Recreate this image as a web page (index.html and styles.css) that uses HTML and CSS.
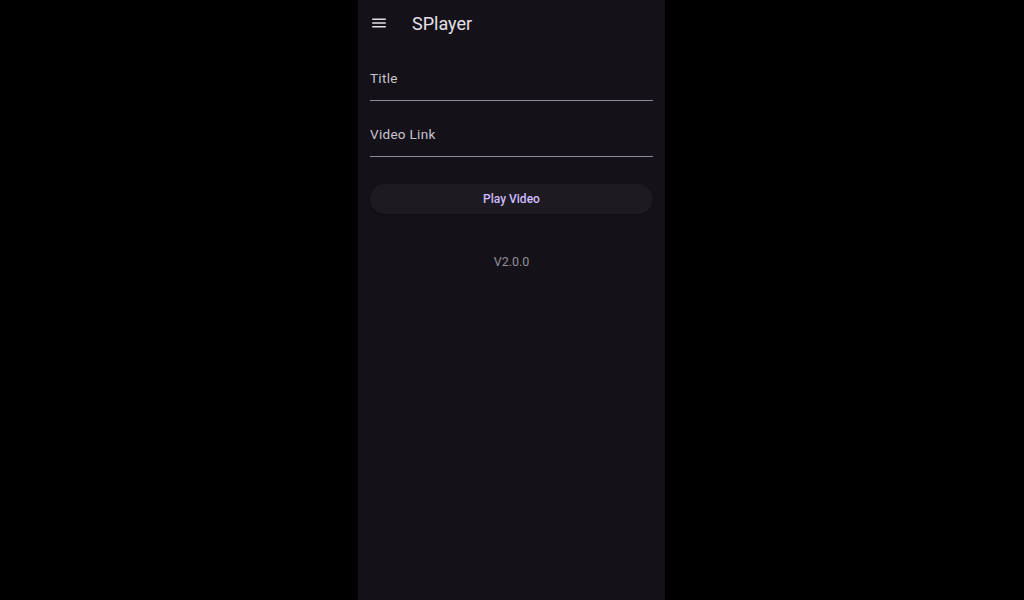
FILE: index.html
```html
<!DOCTYPE html>
<html lang="en">
<head>
    <meta charset="UTF-8">
    <title>SPlayer</title>
    <link rel="stylesheet" href="styles.css">
</head>
<body>
    <div class="phone">
        <div class="app-bar">
            <svg class="menu-icon" width="18" height="18" viewBox="0 0 24 24">
                <path d="M3 18h18v-2H3v2zm0-5h18v-2H3v2zm0-7v2h18V6H3z" fill="#e6e0e9"/>
            </svg>
            <div class="app-title">SPlayer</div>
        </div>
        <div class="content">
            <div class="field">
                <div class="label">Title</div>
            </div>
            <div class="field">
                <div class="label">Video Link</div>
            </div>
            <div class="play-btn">Play Video</div>
            <div class="version">V2.0.0</div>
        </div>
    </div>
</body>
</html>
```
FILE: styles.css
```css
html, body {
    margin: 0;
    height: 100%;
}

body {
    font-family: Roboto, "Noto Sans", sans-serif;
    background-color: #000;
    display: flex;
    justify-content: center;
}

.phone {
    width: 307px;
    margin-left: -1px;
    height: 100%;
    background-color: #141218;
    display: flex;
    flex-direction: column;
}

.app-bar {
    height: 46px;
    display: flex;
    align-items: center;
    padding-left: 12px;
}

    .app-bar .menu-icon {
        display: block;
        margin-bottom: 1px;
    }

    .app-bar .app-title {
        margin-left: 24px;
        color: #e6e0e9;
        font-size: 18px;
        margin-top: 1px;
    }

.content {
    padding: 0 12px;
    display: flex;
    flex-direction: column;
}

.field {
    height: 42px;
    border-bottom: 1px solid #8e8a94;
    display: flex;
    align-items: flex-end;
    margin-top: 12px;
}

    .field .label {
        color: #cac4d0;
        font-size: 13.5px;
        letter-spacing: 0.3px;
        padding-bottom: 14px;
    }

.field + .field {
    margin-top: 13px;
}

.play-btn {
    margin-top: 27px;
    height: 30px;
    border-radius: 15px;
    background-color: #1d1b21;
    box-shadow: 0 1px 2px rgba(0,0,0,0.3);
    color: #d0bcff;
    font-size: 12px;
    font-weight: 500;
    display: flex;
    align-items: center;
    justify-content: center;
}

.version {
    margin-top: 40px;
    text-align: center;
    color: #938f99;
    font-size: 12.5px;
}
```
